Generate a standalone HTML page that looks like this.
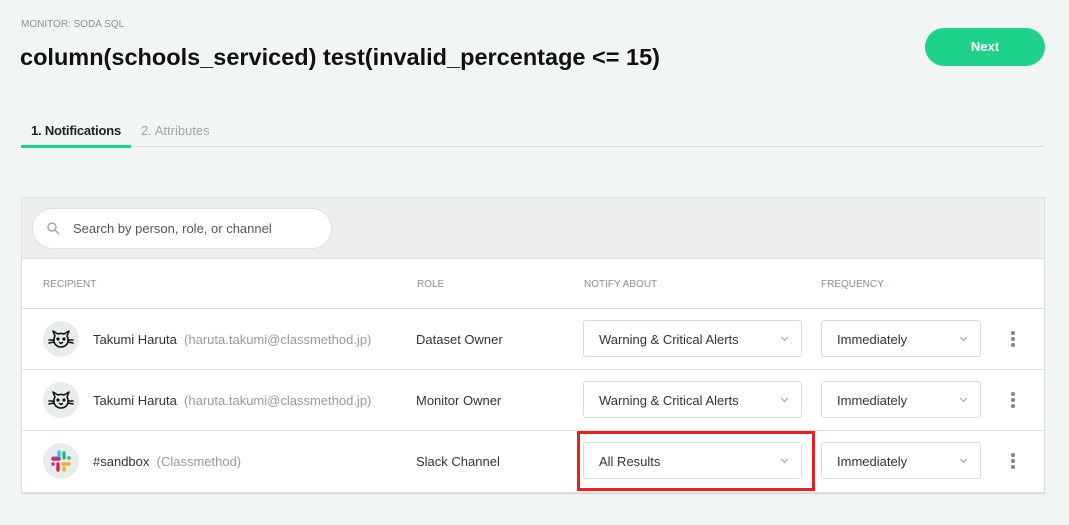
<!DOCTYPE html><html><head><style>
body{margin:0;width:1069px;height:525px;background:#f2f5f6;font-family:"Liberation Sans",sans-serif;position:relative;overflow:hidden}
.a{position:absolute}
.sel{position:absolute;background:#fff;border:1px solid #d8dcdc;border-radius:3px;height:37px;box-sizing:border-box;font-size:13px;color:#333;line-height:37px;padding-left:15px}
.sel:after{content:"";position:absolute;right:14px;top:14px;width:4px;height:4px;border-right:1.3px solid #999;border-bottom:1.3px solid #999;transform:rotate(45deg)}
.row{position:absolute;left:0;width:1022px;height:61px;border-top:1px solid #dde0e0}
.av{position:absolute;left:21px;top:12px;width:36px;height:36px;border-radius:50%;background:#e8ecec}
.nm{position:absolute;left:71px;top:23px;font-size:13px;color:#333}
.nm span{color:#999}
.role{position:absolute;left:394px;top:23px;font-size:13px;color:#333}
.dots{position:absolute;left:989px;top:22px;width:4px}
.dots i{display:block;width:3.5px;height:3.5px;border-radius:50%;background:#888;margin-bottom:2.5px}
.hd{position:absolute;top:20px;font-size:10px;color:#8a9090}
</style></head><body>
<div class="a" style="left:21px;top:19px;font-size:10px;color:#8a9090">MONITOR: SODA SQL</div>
<div class="a" style="left:20px;top:44px;font-size:23.5px;font-weight:bold;color:#111">column(schools_serviced) test(invalid_percentage &lt;= 15)</div>
<div class="a" style="left:925px;top:28px;width:120px;height:38px;border-radius:19px;background:#1ed28a;color:#fff;font-weight:bold;font-size:13px;text-align:center;line-height:38px">Next</div>
<div class="a" style="left:31px;top:123px;font-size:13px;font-weight:bold;color:#222;letter-spacing:-0.2px">1. Notifications</div>
<div class="a" style="left:141px;top:123px;font-size:13px;color:#a0a6a6">2. Attributes</div>
<div class="a" style="left:21px;top:146px;width:1024px;height:1px;background:#d8dcdc"></div>
<div class="a" style="left:21px;top:145px;width:110px;height:3px;background:#1ed28a"></div>
<div class="a" style="left:21px;top:197px;width:1022px;height:294px;border:1px solid #dde0e0;background:#fff;border-radius:2px;box-shadow:0 1px 1px #d0d4d4">
 <div class="a" style="left:0;top:0;width:1022px;height:60px;background:#edefef;border-bottom:1px solid #dde0e0"></div>
 <div class="a" style="left:10px;top:10px;width:298px;height:39px;border:1px solid #dde0e0;border-radius:20px;background:#fff">
  <svg class="a" style="left:14px;top:13px" width="13" height="13" viewBox="0 0 13 13"><circle cx="5" cy="5" r="4" fill="none" stroke="#aaa" stroke-width="1.5"/><path d="M8 8l4 4" stroke="#aaa" stroke-width="1.6"/></svg>
  <div class="a" style="left:40px;top:12px;font-size:13px;color:#555">Search by person, role, or channel</div>
 </div>
 <div class="a" style="top:61px;left:0;width:1022px;height:50px">
  <div class="hd" style="left:21px">RECIPIENT</div><div class="hd" style="left:395px">ROLE</div><div class="hd" style="left:562px">NOTIFY ABOUT</div><div class="hd" style="left:799px">FREQUENCY</div>
 </div>
 <svg width="0" height="0" style="position:absolute"><defs><g id="cat" fill="none" stroke="#111" stroke-width="1.6" stroke-linejoin="round" stroke-linecap="round"><path d="M10 10l2 5c-1.5 2-1.5 6 0 8 3 4 9 4 12 0 1.5-2 1.5-6 0-8l2-5-5 3c-2-.8-4-.8-6 0z"/><path d="M6 19h5M6 22l5-1M30 19h-5M30 22l-5-1"/><circle cx="15" cy="18" r=".8" fill="#111"/><circle cx="21" cy="18" r=".8" fill="#111"/><path d="M16.5 21.5l1.5 1 1.5-1"/></g></defs></svg>
 <div class="row" style="top:110px"><div class="av"><svg width="36" height="36"><use href="#cat"/></svg></div><div class="nm">Takumi Haruta &nbsp;<span>(haruta.takumi@classmethod.jp)</span></div><div class="role">Dataset Owner</div>
  <div class="sel" style="left:561px;top:11px;width:219px">Warning &amp; Critical Alerts</div><div class="sel" style="left:799px;top:11px;width:160px">Immediately</div><div class="dots"><i></i><i></i><i></i></div></div>
 <div class="row" style="top:171px"><div class="av"><svg width="36" height="36"><use href="#cat"/></svg></div><div class="nm">Takumi Haruta &nbsp;<span>(haruta.takumi@classmethod.jp)</span></div><div class="role">Monitor Owner</div>
  <div class="sel" style="left:561px;top:11px;width:219px">Warning &amp; Critical Alerts</div><div class="sel" style="left:799px;top:11px;width:160px">Immediately</div><div class="dots"><i></i><i></i><i></i></div></div>
 <div class="row" style="top:232px"><div class="av"><svg width="36" height="36" viewBox="0 0 36 36"><g stroke-linecap="round" stroke-width="3.4"><path d="M16 9v6" stroke="#36c5f0"/><path d="M10 15h4" stroke="#36c5f0"/><path d="M21 10v5" stroke="#2eb67d"/><path d="M26 15h0" stroke="#2eb67d"/><path d="M20 21h6" stroke="#ecb22e"/><path d="M21 25v2" stroke="#ecb22e"/><path d="M15 21v6" stroke="#e01e5a"/><path d="M10 21h0" stroke="#e01e5a"/><path d="M10 16h6" stroke="#e01e5a"/></g></svg></div><div class="nm">#sandbox &nbsp;<span>(Classmethod)</span></div><div class="role">Slack Channel</div>
  <div class="sel" style="left:561px;top:11px;width:219px">All Results</div><div class="sel" style="left:799px;top:11px;width:160px">Immediately</div><div class="dots"><i></i><i></i><i></i></div></div>
</div>
<div class="a" style="left:577px;top:431px;width:238px;height:60px;box-sizing:border-box;border:3px solid #e8211e"></div>
</body></html>
